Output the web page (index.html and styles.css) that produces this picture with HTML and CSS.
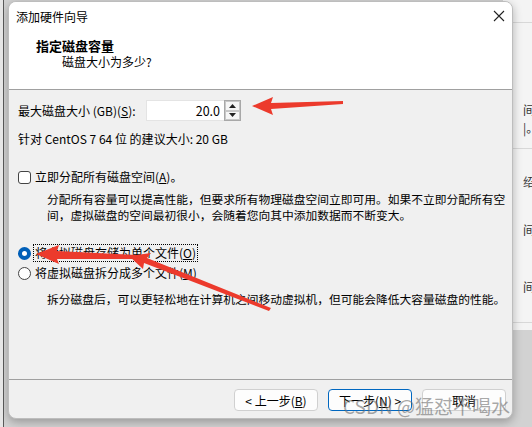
FILE: index.html
```html
<!DOCTYPE html>
<html lang="zh-CN">
<head>
  <meta charset="UTF-8" />
  <title>添加硬件向导</title>
  <link rel="stylesheet" href="styles.css">
</head>
<body>

<div class="desktop">
  <div class="behind">
    <div class="behind-line l1"></div>
    <div class="behind-line l2"></div>
    <div class="behind-line l3"></div>
    <span class="behind-text t1">间</span>
    <span class="behind-text t2">|。</span>
    <span class="behind-text t3">绍</span>
    <span class="behind-text t4">间</span>
    <span class="behind-text t5">间</span>
  </div>

  <div class="dialog">
    <div class="titlebar">
      <span>添加硬件向导</span>
      <span class="close">
        <svg width="12" height="12" viewBox="0 0 12 12"><path d="M1 1 L11 11 M11 1 L1 11" stroke="#222" stroke-width="1.1"/></svg>
      </span>
    </div>

    <div class="header">
      <div class="header-title">指定磁盘容量</div>
      <div class="header-sub">磁盘大小为多少?</div>
    </div>

    <div class="content">
      <div class="size-row">
        <span class="size-label">最大磁盘大小 (GB)(<u>S</u>):</span>
        <div class="spin">
          <div class="spin-input">20.0</div>
          <div class="spin-btns">
            <div class="spin-btn"><svg width="7" height="4" viewBox="0 0 7 4"><path d="M0 4 L3.5 0 L7 4 Z" fill="#222"/></svg></div>
            <div class="spin-btn"><svg width="7" height="4" viewBox="0 0 7 4"><path d="M0 0 L3.5 4 L7 0 Z" fill="#222"/></svg></div>
          </div>
        </div>
      </div>

      <div class="recommend">针对 CentOS 7 64 位 的建议大小: 20 GB</div>

      <div class="option check-row">
        <span class="checkbox"></span>
        <span>立即分配所有磁盘空间(<u>A</u>)。</span>
      </div>
      <div class="desc">分配所有容量可以提高性能，但要求所有物理磁盘空间立即可用。如果不立即分配所有空间，虚拟磁盘的空间最初很小，会随着您向其中添加数据而不断变大。</div>

      <div class="option radio-row first">
        <span class="radio checked"></span>
        <span class="focus">将虚拟磁盘存储为单个文件(<u>O</u>)</span>
      </div>
      <div class="option radio-row">
        <span class="radio"></span>
        <span class="plain">将虚拟磁盘拆分成多个文件(<u>M</u>)</span>
      </div>
      <div class="desc single">拆分磁盘后，可以更轻松地在计算机之间移动虚拟机，但可能会降低大容量磁盘的性能。</div>
    </div>

    <div class="footer">
      <button class="btn">&lt; 上一步(<u>B</u>)</button>
      <button class="btn primary">下一步(<u>N</u>) &gt;</button>
      <button class="btn">取消</button>
    </div>
  </div>

  <div class="watermark">CSDN @猛怼不喝水</div>

  <svg class="marks" width="532" height="427" viewBox="0 0 532 427">
    <path d="M249 106 L270 97 L268 103 L340 101 L340 104 L268 109 L270 115 Z" fill="#ec3a2c"/>
    <path d="M33 254 L56 245 L54 251 L134 255 L134 259 L54 259 L56 264 Z" fill="#ec3a2c"/>
    <path d="M126 256 L148 253 L144 258 L268 308 L266 311 L141 263 L140 269 Z" fill="#ec3a2c"/>
  </svg>
</div>

</body>
</html>
```

FILE: styles.css
```css
* {
  box-sizing: border-box;
}

body {
  margin: 0;
  font-family: "Noto Sans CJK SC", "Noto Sans", sans-serif;
  font-size: 12px;
  color: #000;
}

.desktop {
  position: relative;
  width: 532px;
  height: 427px;
  overflow: hidden;
  background: #d2d2d2;
  padding: 1px 0 0 5px;
  border-left: 3px solid #e6e6e6;
}

.desktop::before {
  content: "";
  position: absolute;
  left: 0;
  top: 0;
  bottom: 0;
  width: 1px;
  background: #5a5a5a;
}

/* window behind the dialog, only its right edge is visible */
.behind {
  position: absolute;
  left: 500px;
  top: 0;
  width: 40px;
  height: 330px;
  background: #f4f4f4;
}

.behind-line {
  position: absolute;
  left: 0;
  right: 0;
  height: 1px;
  background: #d8d8d8;
}

.behind-line.l1 { top: 22px; }
.behind-line.l2 { top: 148px; }
.behind-line.l3 { top: 322px; }

.behind-text {
  position: absolute;
  left: 20px;
  font-size: 12px;
  color: #333;
}

.t1 { top: 101px; }
.t2 { top: 119px; }
.t3 { top: 173px; }
.t4 { top: 221px; }
.t5 { top: 278px; }

.dialog {
  position: relative;
  width: 505px;
  height: 418px;
  background: #f0f0f0;
  border: 1px solid #bdbdbd;
  border-radius: 8px;
  box-shadow: 0 3px 10px rgba(0, 0, 0, 0.28);
  display: flex;
  flex-direction: column;
  overflow: hidden;
}

.titlebar {
  height: 28px;
  padding: 0 8px 0 7px;
  background: #fff;
  display: flex;
  align-items: center;
  justify-content: space-between;
}

.close {
  display: flex;
  width: 12px;
  height: 12px;
  margin-right: -1px;
}

.header {
  height: 60px;
  background: #fff;
  border-bottom: 1px solid #a0a0a0;
  padding: 8px 0 0 27px;
  line-height: 16px;
}

.header-title {
  font-weight: bold;
  font-size: 13px;
}

.header-sub {
  padding-left: 26px;
}

.content {
  flex: 1;
  padding: 10px 0 0 9px;
  line-height: 16px;
}

.size-row {
  display: flex;
  align-items: center;
  height: 21px;
}

.size-label {
  width: 128px;
}

.spin {
  display: flex;
  height: 21px;
}

.spin-input {
  width: 78px;
  background: #fff;
  border: 1px solid #e4e4e4;
  border-right: none;
  text-align: right;
  padding-right: 4px;
  line-height: 19px;
  font-size: 12.5px;
}

.spin-btns {
  display: flex;
  flex-direction: column;
  width: 17px;
  border: 1px solid #a8a8a8;
  background: #fff;
}

.spin-btn {
  flex: 1;
  display: flex;
  align-items: center;
  justify-content: center;
  border: 1px solid #c8c8c8;
  background: #f6f6f6;
}

.recommend {
  margin-top: 10px;
}

.option {
  display: flex;
  align-items: center;
  height: 16px;
}

.check-row {
  margin-top: 22px;
}

.checkbox {
  width: 13px;
  height: 13px;
  border: 1px solid #444;
  border-radius: 3px;
  background: #fff;
  margin-right: 4px;
}

.desc {
  margin-top: 6px;
  padding-left: 29px;
  width: 492px;
  font-size: 11.75px;
}

.desc.single {
  margin-top: 10px;
}

.radio-row {
  margin-top: 4px;
}

.radio-row.first {
  margin-top: 22px;
}

.radio {
  width: 13px;
  height: 13px;
  border: 1px solid #444;
  border-radius: 50%;
  background: #fff;
  margin-right: 3px;
}

.radio.checked {
  border: 4px solid #005fb8;
}

.focus {
  outline: 1px dotted #000;
  outline-offset: 0;
  padding: 0 1px;
}

.plain {
  padding: 0 1px;
}

.footer {
  height: 39px;
  border-top: 1px solid #a0a0a0;
  display: flex;
  justify-content: flex-end;
  gap: 10px;
  padding: 9px 6px 0 0;
}

.btn {
  width: 84px;
  height: 22px;
  font-family: inherit;
  font-size: 12px;
  background: #fdfdfd;
  border: 1px solid #d0d0d0;
  border-radius: 4px;
  padding: 0;
  color: #000;
}

.btn.primary {
  border: 1px solid #0067c0;
}

.watermark {
  position: absolute;
  left: 340px;
  top: 393px;
  font-size: 19px;
  line-height: 26px;
  color: rgba(110, 110, 110, 0.6);
}

.marks {
  position: absolute;
  left: 0;
  top: 0;
  pointer-events: none;
}
```
